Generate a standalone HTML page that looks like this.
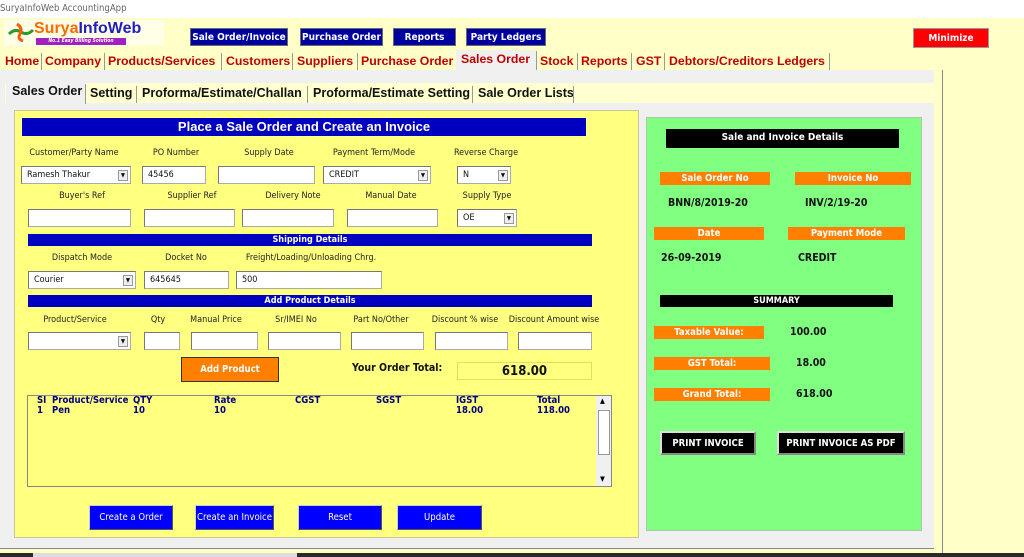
<!DOCTYPE html>
<html><head><meta charset="utf-8"><style>
*{margin:0;padding:0;box-sizing:border-box}
body{width:1024px;height:557px;overflow:hidden;background:#ffffc8;position:relative;font-family:"DejaVu Sans Condensed","Liberation Sans",sans-serif;}
.a{position:absolute}
.t{position:absolute;white-space:nowrap}
.nb{background:#0000a0;color:#fff;font-weight:bold;font-size:10px;text-align:center;line-height:17px;border:1px solid #6a6a6a}
.menu{font-weight:bold;font-size:12.3px;color:#c00000;top:54px;font-family:"Liberation Sans",sans-serif}
.sep{position:absolute;width:1px;background:#999;height:17px;top:53px}
.sub{font-weight:bold;font-size:12.5px;color:#111;top:86px;font-family:"Liberation Sans",sans-serif}
.lbl{font-size:9px;color:#222;transform:translateX(-50%);top:148px}
.in{position:absolute;background:#fff;border:1px solid #aaa;border-top-color:#777;border-left-color:#777;height:18px;font-size:9px;line-height:16px;padding-left:5px;color:#111}
.dd{position:absolute;right:2px;top:3px;width:10px;height:11px;background:#eee;border:1px solid #999;font-size:6px;line-height:9px;text-align:center}
.bar{background:#0000c0;color:#fff;font-weight:bold;font-size:9px;text-align:center;line-height:12px}
.lh{font-size:9.5px;font-weight:bold;color:#000080}
.bb{background:#0000ff;color:#fff;font-size:9.5px;text-align:center;line-height:24px;border:1px solid #555;border-top-color:#ccc;border-left-color:#ccc;top:505px;height:25px}
.or{background:#ff8000;color:#fff;font-weight:bold;font-size:9.5px;text-align:center;line-height:13px;height:13px}
.gv{font-weight:bold;font-size:10.5px;color:#111}
.pb{background:#000;color:#fff;font-weight:bold;font-size:9.5px;text-align:center;line-height:21px;border:2px solid #888;border-top-color:#ddd;border-left-color:#ddd;top:431px;height:24px}
</style></head><body>
<div class="a" style="left:0;top:0;width:1024px;height:18px;background:#fff"></div>
<div class="t" style="left:0;top:3px;font-size:9.5px;color:#666">SuryaInfoWeb AccountingApp</div>
<div class="a" style="left:4px;top:20px;width:160px;height:26px;background:#ffffe8"></div>
<svg class="a" style="left:7px;top:22px" width="30" height="20" viewBox="0 0 30 20"><path d="M2 12 Q8 6 14 10 Q20 14 26 8" stroke="#2a9a2a" stroke-width="3" fill="none"/><path d="M10 2 Q16 6 13 12 Q10 17 16 19" stroke="#ff5a00" stroke-width="3" fill="none"/></svg>
<div class="t" style="left:34px;top:20px;font-size:16px;font-weight:bold;font-family:'Liberation Sans',sans-serif"><span style="color:#ff6a00">Surya</span><span style="color:#2020c0">InfoWeb</span></div>
<div class="a" style="left:36px;top:38px;width:90px;height:7px;background:#a020c0;color:#fff;font-size:5px;line-height:7px;font-style:italic;font-weight:bold;text-align:center">No.1 Easy Billing Solution</div>
<div class="a nb" style="left:190px;top:28px;width:98px;height:18px">Sale Order/Invoice</div>
<div class="a nb" style="left:300px;top:28px;width:83px;height:18px">Purchase Order</div>
<div class="a nb" style="left:393px;top:28px;width:63px;height:18px">Reports</div>
<div class="a nb" style="left:466px;top:28px;width:80px;height:18px">Party Ledgers</div>
<div class="a" style="left:913px;top:28px;width:76px;height:20px;background:#f00;color:#fff;font-weight:bold;font-size:10px;text-align:center;line-height:20px;border:1px solid #999">Minimize</div>
<div class="t menu" style="left:5px">Home</div><div class="sep" style="left:41px"></div>
<div class="t menu" style="left:45px">Company</div><div class="sep" style="left:104px"></div>
<div class="t menu" style="left:108px">Products/Services</div><div class="sep" style="left:221px"></div>
<div class="t menu" style="left:226px">Customers</div><div class="sep" style="left:292px"></div>
<div class="t menu" style="left:297px">Suppliers</div><div class="sep" style="left:357px"></div>
<div class="t menu" style="left:361px">Purchase Order</div>
<div class="a" style="left:456px;top:50px;width:80px;height:22px;background:#f0f0f0"></div>
<div class="t menu" style="left:461px;top:52px">Sales Order</div><div class="sep" style="left:536px;top:51px;height:20px"></div>
<div class="t menu" style="left:540px">Stock</div><div class="sep" style="left:577px"></div>
<div class="t menu" style="left:581px">Reports</div><div class="sep" style="left:631px"></div>
<div class="t menu" style="left:636px">GST</div><div class="sep" style="left:664px"></div>
<div class="t menu" style="left:669px">Debtors/Creditors Ledgers</div><div class="sep" style="left:829px"></div>
<div class="a" style="left:0;top:70px;width:934px;height:479px;background:#f0f0f0;border-bottom:1px solid #888"></div>
<div class="a" style="left:942px;top:70px;width:1px;height:487px;background:#888"></div>
<div class="a" style="left:5px;top:83px;width:930px;height:20px;background:#ffffd0"></div>
<div class="a" style="left:6px;top:82px;width:79px;height:22px;background:#f0f0f0"></div>
<div class="t sub" style="left:12px;top:84px">Sales Order</div><div class="sep" style="left:85px;top:84px;height:20px"></div>
<div class="t sub" style="left:90px">Setting</div><div class="sep" style="left:136px;top:86px"></div>
<div class="t sub" style="left:142px">Proforma/Estimate/Challan</div><div class="sep" style="left:307px;top:86px"></div>
<div class="t sub" style="left:313px">Proforma/Estimate Setting</div><div class="sep" style="left:472px;top:86px"></div>
<div class="t sub" style="left:478px">Sale Order Lists</div><div class="sep" style="left:573px;top:86px"></div>
<div class="a" style="left:14px;top:110px;width:625px;height:428px;background:#ffff80;border:1px solid #c8c8a0"></div>
<div class="a" style="left:22px;top:118px;width:564px;height:18px;background:#0000c0;color:#fff;font-weight:bold;font-size:13px;text-align:center;line-height:17px;font-family:'Liberation Sans',sans-serif">Place a Sale Order and Create an Invoice</div>
<div class="t lbl" style="left:74px">Customer/Party Name</div>
<div class="t lbl" style="left:176px">PO Number</div>
<div class="t lbl" style="left:269px">Supply Date</div>
<div class="t lbl" style="left:374px">Payment Term/Mode</div>
<div class="t lbl" style="left:486px">Reverse Charge</div>
<div class="in" style="left:21px;top:166px;width:110px">Ramesh Thakur<div class="dd">▼</div></div>
<div class="in" style="left:142px;top:166px;width:64px">45456</div>
<div class="in" style="left:218px;top:166px;width:97px"></div>
<div class="in" style="left:323px;top:166px;width:108px">CREDIT<div class="dd">▼</div></div>
<div class="in" style="left:457px;top:166px;width:54px">N<div class="dd">▼</div></div>
<div class="t lbl" style="left:82px;top:191px">Buyer's Ref</div>
<div class="t lbl" style="left:192px;top:191px">Supplier Ref</div>
<div class="t lbl" style="left:293px;top:191px">Delivery Note</div>
<div class="t lbl" style="left:391px;top:191px">Manual Date</div>
<div class="t lbl" style="left:487px;top:191px">Supply Type</div>
<div class="in" style="left:28px;top:209px;width:103px"></div>
<div class="in" style="left:144px;top:209px;width:91px"></div>
<div class="in" style="left:242px;top:209px;width:92px"></div>
<div class="in" style="left:347px;top:209px;width:91px"></div>
<div class="in" style="left:457px;top:209px;width:60px">OE<div class="dd">▼</div></div>
<div class="a bar" style="left:28px;top:234px;width:564px;height:12px">Shipping Details</div>
<div class="t lbl" style="left:82px;top:253px">Dispatch Mode</div>
<div class="t lbl" style="left:186px;top:253px">Docket No</div>
<div class="t lbl" style="left:311px;top:253px">Freight/Loading/Unloading Chrg.</div>
<div class="in" style="left:28px;top:271px;width:108px">Courier<div class="dd">▼</div></div>
<div class="in" style="left:144px;top:271px;width:85px">645645</div>
<div class="in" style="left:236px;top:271px;width:146px">500</div>
<div class="a bar" style="left:28px;top:295px;width:564px;height:12px">Add Product Details</div>
<div class="t lbl" style="left:75px;top:315px">Product/Service</div>
<div class="t lbl" style="left:158px;top:315px">Qty</div>
<div class="t lbl" style="left:216px;top:315px">Manual Price</div>
<div class="t lbl" style="left:296px;top:315px">Sr/IMEI No</div>
<div class="t lbl" style="left:381px;top:315px">Part No/Other</div>
<div class="t lbl" style="left:465px;top:315px">Discount % wise</div>
<div class="t lbl" style="left:554px;top:315px">Discount Amount wise</div>
<div class="in" style="left:28px;top:332px;width:103px"><div class="dd">▼</div></div>
<div class="in" style="left:144px;top:332px;width:36px"></div>
<div class="in" style="left:191px;top:332px;width:67px"></div>
<div class="in" style="left:268px;top:332px;width:73px"></div>
<div class="in" style="left:351px;top:332px;width:73px"></div>
<div class="in" style="left:435px;top:332px;width:73px"></div>
<div class="in" style="left:518px;top:332px;width:74px"></div>
<div class="a" style="left:181px;top:357px;width:98px;height:25px;background:#ff8000;border:1px solid #333;color:#fff;font-weight:bold;font-size:9.5px;text-align:center;line-height:23px">Add Product</div>
<div class="t" style="left:352px;top:362px;font-weight:bold;font-size:10.5px;color:#111">Your Order Total:</div>
<div class="a" style="left:457px;top:362px;width:135px;height:18px;border:1px solid #e0e060;font-weight:bold;font-size:13px;text-align:center;line-height:17px;color:#111">618.00</div>
<div class="a" style="left:27px;top:395px;width:585px;height:92px;border:1px solid #888;background:#ffff80"></div>
<div class="a" style="left:596px;top:396px;width:15px;height:90px;background:#f0f0f0"></div>
<div class="a" style="left:598px;top:410px;width:12px;height:45px;background:#fff;border:1px solid #999"></div>
<div class="t" style="left:600px;top:397px;font-size:7px">▲</div>
<div class="t" style="left:600px;top:475px;font-size:7px">▼</div>
<div class="t lh" style="left:37px;top:395px">SI</div><div class="t lh" style="left:37px;top:405px">1</div>
<div class="t lh" style="left:52px;top:395px">Product/Service</div><div class="t lh" style="left:52px;top:405px">Pen</div>
<div class="t lh" style="left:133px;top:395px">QTY</div><div class="t lh" style="left:133px;top:405px">10</div>
<div class="t lh" style="left:214px;top:395px">Rate</div><div class="t lh" style="left:214px;top:405px">10</div>
<div class="t lh" style="left:295px;top:395px">CGST</div>
<div class="t lh" style="left:376px;top:395px">SGST</div>
<div class="t lh" style="left:456px;top:395px">IGST</div><div class="t lh" style="left:456px;top:405px">18.00</div>
<div class="t lh" style="left:537px;top:395px">Total</div><div class="t lh" style="left:537px;top:405px">118.00</div>
<div class="a bb" style="left:89px;width:84px">Create a Order</div>
<div class="a bb" style="left:195px;width:79px">Create an Invoice</div>
<div class="a bb" style="left:298px;width:84px">Reset</div>
<div class="a bb" style="left:397px;width:85px">Update</div>
<div class="a" style="left:646px;top:117px;width:276px;height:414px;background:#80ff80;border:1px solid #aac8aa"></div>
<div class="a" style="left:666px;top:129px;width:233px;height:19px;background:#000;color:#fff;font-weight:bold;font-size:10px;text-align:center;line-height:17px">Sale and Invoice Details</div>
<div class="a or" style="left:660px;top:172px;width:110px">Sale Order No</div>
<div class="a or" style="left:795px;top:172px;width:116px">Invoice No</div>
<div class="t gv" style="left:668px;top:197px">BNN/8/2019-20</div>
<div class="t gv" style="left:805px;top:197px">INV/2/19-20</div>
<div class="a or" style="left:654px;top:227px;width:110px">Date</div>
<div class="a or" style="left:788px;top:227px;width:117px">Payment Mode</div>
<div class="t gv" style="left:661px;top:252px">26-09-2019</div>
<div class="t gv" style="left:798px;top:252px">CREDIT</div>
<div class="a" style="left:660px;top:295px;width:233px;height:12px;background:#000;color:#fff;font-weight:bold;font-size:9px;text-align:center;line-height:12px">SUMMARY</div>
<div class="a or" style="left:654px;top:326px;width:110px">Taxable Value:</div>
<div class="t gv" style="left:790px;top:326px">100.00</div>
<div class="a or" style="left:654px;top:357px;width:116px">GST Total:</div>
<div class="t gv" style="left:796px;top:357px">18.00</div>
<div class="a or" style="left:654px;top:388px;width:116px">Grand Total:</div>
<div class="t gv" style="left:796px;top:388px">618.00</div>
<div class="a pb" style="left:660px;width:96px">PRINT INVOICE</div>
<div class="a pb" style="left:777px;width:128px">PRINT INVOICE AS PDF</div>
<div class="a" style="left:0;top:553px;width:1024px;height:4px;background:#2a2a2a"></div>
<div class="a" style="left:33px;top:553px;width:264px;height:4px;background:#ddd"></div>
</body></html>
